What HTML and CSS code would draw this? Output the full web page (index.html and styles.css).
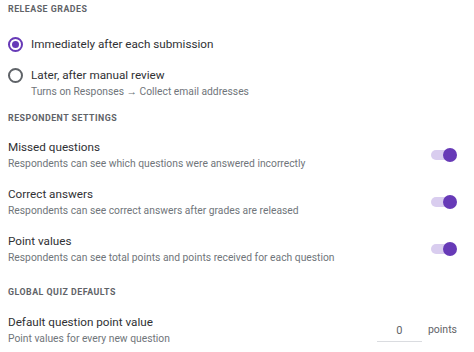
FILE: index.html
```html
<!DOCTYPE html>
<html>
<head>
<meta charset="utf-8">
<link rel="stylesheet" href="styles.css">
</head>
<body>
<div class="page">
  <div class="section-title first">Release grades</div>
  <div class="radios">
    <div class="radio-row">
      <span class="radio checked"><span class="dot"></span></span>
      <div class="text">
        <div class="title">Immediately after each submission</div>
      </div>
    </div>
    <div class="radio-row second">
      <span class="radio"></span>
      <div class="text">
        <div class="title">Later, after manual review</div>
        <div class="sub">Turns on Responses → Collect email addresses</div>
      </div>
    </div>
  </div>

  <div class="section-title">Respondent settings</div>
  <div class="item first-item">
    <div class="text">
      <div class="title">Missed questions</div>
      <div class="sub">Respondents can see which questions were answered incorrectly</div>
    </div>
    <span class="toggle on"><span class="thumb"></span></span>
  </div>
  <div class="item">
    <div class="text">
      <div class="title">Correct answers</div>
      <div class="sub">Respondents can see correct answers after grades are released</div>
    </div>
    <span class="toggle on"><span class="thumb"></span></span>
  </div>
  <div class="item">
    <div class="text">
      <div class="title">Point values</div>
      <div class="sub">Respondents can see total points and points received for each question</div>
    </div>
    <span class="toggle on"><span class="thumb"></span></span>
  </div>

  <div class="section-title third">Global quiz defaults</div>
  <div class="item last-item">
    <div class="text">
      <div class="title">Default question point value</div>
      <div class="sub">Point values for every new question</div>
    </div>
    <div class="points">
      <span class="points-input">0</span>
      <span class="points-label">points</span>
    </div>
  </div>
</div>
</body>
</html>
```
FILE: styles.css
```css
html, body {
  margin: 0;
  padding: 0;
  background: #ffffff;
}
.page {
  font-family: Roboto, "Liberation Sans", sans-serif;
  padding: 0 17px 0 8px;
  color: #202124;
}
.section-title {
  font-size: 8.8px;
  font-weight: 700;
  letter-spacing: 0.5px;
  text-transform: uppercase;
  color: #5f6368;
  line-height: 14px;
  margin-top: 11px;
}
.section-title.first {
  margin-top: 2px;
}
.section-title.third {
  margin-top: 19px;
}
.radios {
  margin-top: 19px;
}
.radio-row {
  display: flex;
  align-items: flex-start;
  gap: 8px;
}
.radio-row.second {
  margin-top: 13px;
}
.radio {
  box-sizing: border-box;
  width: 15px;
  height: 15px;
  border: 2px solid #5f6368;
  border-radius: 50%;
  margin-top: 1.5px;
  display: flex;
  align-items: center;
  justify-content: center;
  flex: none;
}
.radio.checked {
  border-color: #673ab7;
}
.radio .dot {
  width: 7px;
  height: 7px;
  border-radius: 50%;
  background: #673ab7;
}
.title {
  font-size: 11.7px;
  line-height: 18px;
  color: #303134;
}
.sub {
  font-size: 10.3px;
  line-height: 16px;
  color: #70757a;
}
.item {
  display: flex;
  align-items: center;
  justify-content: space-between;
  margin-top: 13px;
}
.item.last-item {
  margin-top: 14px;
}
.toggle {
  position: relative;
  width: 22px;
  height: 10px;
  border-radius: 5px;
  background: #d9cdef;
  flex: none;
  margin-right: 4px;
}
.toggle .thumb {
  position: absolute;
  right: -4px;
  top: -2px;
  width: 14px;
  height: 14px;
  border-radius: 50%;
  background: #673ab7;
}
.points {
  display: flex;
  align-items: center;
  gap: 6px;
  flex: none;
}
.points-input {
  box-sizing: border-box;
  width: 45px;
  height: 22px;
  line-height: 22px;
  text-align: center;
  font-size: 11px;
  color: #5f6368;
  border-bottom: 1px solid #dadce0;
  margin-top: 1px;
}
.points-label {
  font-size: 10.5px;
  color: #5f6368;
  margin-top: -2px;
}
```
